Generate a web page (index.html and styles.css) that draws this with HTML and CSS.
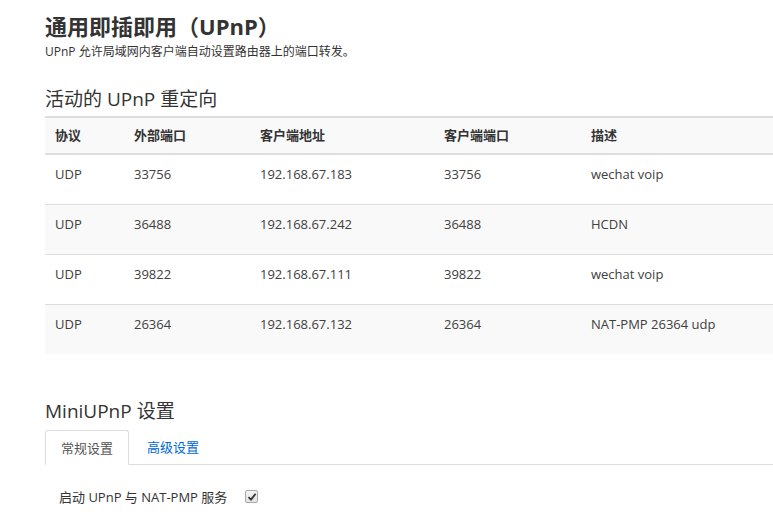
FILE: index.html
```html
<!DOCTYPE html>
<html>
<head>
  <meta charset="utf-8">
  <link rel="stylesheet" href="styles.css">
</head>
<body>
  <div class="page">
    <h2 class="title">通用即插即用（UPnP）</h2>
    <div class="desc">UPnP 允许局域网内客户端自动设置路由器上的端口转发。</div>

    <h3 class="section-title">活动的 UPnP 重定向</h3>
    <table class="redirects">
      <thead>
        <tr>
          <th class="c-proto">协议</th>
          <th class="c-ext">外部端口</th>
          <th class="c-addr">客户端地址</th>
          <th class="c-port">客户端端口</th>
          <th>描述</th>
        </tr>
      </thead>
      <tbody>
        <tr>
          <td>UDP</td><td>33756</td><td>192.168.67.183</td><td>33756</td><td>wechat voip</td>
        </tr>
        <tr>
          <td>UDP</td><td>36488</td><td>192.168.67.242</td><td>36488</td><td>HCDN</td>
        </tr>
        <tr>
          <td>UDP</td><td>39822</td><td>192.168.67.111</td><td>39822</td><td>wechat voip</td>
        </tr>
        <tr>
          <td>UDP</td><td>26364</td><td>192.168.67.132</td><td>26364</td><td>NAT-PMP 26364 udp</td>
        </tr>
      </tbody>
    </table>

    <h3 class="section-title settings-title">MiniUPnP 设置</h3>
    <ul class="tabs">
      <li class="tab active">常规设置</li>
      <li class="tab"><a href="#">高级设置</a></li>
    </ul>

    <div class="field">
      <label class="field-label">启动 UPnP 与 NAT-PMP 服务</label>
      <span class="checkbox checked">
        <svg width="10" height="10" viewBox="0 0 10 10"><path d="M1.5 5.2 L4 7.6 L8.6 1.8" fill="none" stroke="#333" stroke-width="1.8"/></svg>
      </span>
    </div>
  </div>
</body>
</html>
```

FILE: styles.css
```css
* {
  margin: 0;
  padding: 0;
  box-sizing: border-box;
}

body {
  font-family: "Open Sans", "Noto Sans CJK SC", sans-serif;
  font-size: 13px;
  color: #404040;
  background: #fff;
  overflow: hidden;
}

.page {
  padding: 8px 0 0 45px;
  width: 830px;
}

.title {
  font-size: 22px;
  font-weight: 700;
  color: #333;
  line-height: 36px;
}

.desc {
  font-size: 12px;
  color: #333;
  line-height: 16px;
}

.section-title {
  font-size: 19px;
  font-weight: 400;
  color: #333;
  line-height: 26px;
  margin-top: 26px;
  margin-bottom: 4px;
}

.redirects {
  width: 100%;
  border-collapse: collapse;
  border-top: 2px solid #ddd;
}

.redirects th,
.redirects td {
  text-align: left;
  padding: 0 10px;
  vertical-align: top;
}

.redirects th {
  font-weight: 700;
  color: #333;
  height: 35px;
  line-height: 35px;
  background: #f9f9f9;
  border-bottom: 2px solid #ddd;
}

.redirects td {
  height: 50px;
  padding-top: 9px;
  line-height: 20px;
  border-top: 1px solid #ddd;
}

.redirects tbody tr:first-child td {
  border-top: none;
}

.redirects tbody tr:nth-child(even) td {
  background: #f9f9f9;
}

.c-proto { width: 79px; }
.c-ext { width: 126px; }
.c-addr { width: 184px; }
.c-port { width: 147px; }

.settings-title {
  margin-top: 44px;
  margin-bottom: 6px;
}

.tabs {
  list-style: none;
  display: flex;
  border-bottom: 1px solid #ddd;
  height: 35px;
}

.tab {
  padding: 0 18px;
  line-height: 34px;
  font-size: 13px;
  color: #555;
}

.tab.active {
  border: 1px solid #ddd;
  border-bottom-color: #fff;
  border-radius: 3px 3px 0 0;
  background: #fff;
  height: 35px;
  padding: 0 15px;
}

.tab a {
  color: #0069d6;
  text-decoration: none;
}

.field {
  display: flex;
  align-items: center;
  padding: 22px 0 0 14px;
}

.field-label {
  width: 186px;
  color: #333;
}

.checkbox {
  width: 13px;
  height: 13px;
  border: 1px solid #aaa;
  border-radius: 2px;
  background: linear-gradient(#f4f4f4, #e2e2e2);
  display: flex;
  align-items: center;
  justify-content: center;
}
```
